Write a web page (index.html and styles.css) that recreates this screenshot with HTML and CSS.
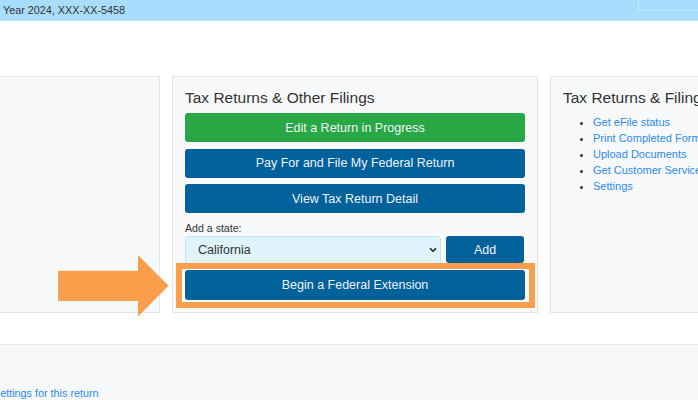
FILE: index.html
```html
<!DOCTYPE html>
<html>
<head>
<meta charset="utf-8">
<link rel="stylesheet" href="styles.css">
</head>
<body>
<div class="page">
  <header class="topbar">
    <span class="topbar-text">Year 2024, XXX-XX-5458</span>
    <span class="topbar-btn"></span>
  </header>

  <main class="cards">
    <section class="card card-left"></section>

    <section class="card card-mid">
      <h2 class="card-title">Tax Returns &amp; Other Filings</h2>
      <button class="btn btn-green">Edit a Return in Progress</button>
      <button class="btn btn-blue">Pay For and File My Federal Return</button>
      <button class="btn btn-blue">View Tax Return Detail</button>
      <label class="state-label">Add a state:</label>
      <div class="state-row">
        <div class="select-wrap">
          <select class="state-select">
            <option>California</option>
          </select>
          <svg class="chevron" width="8" height="6" viewBox="0 0 8 6"><path d="M1 1.2 L4 4.2 L7 1.2" fill="none" stroke="#222" stroke-width="1.6"/></svg>
        </div>
        <button class="btn btn-blue btn-add">Add</button>
      </div>
      <div class="highlight">
        <button class="btn btn-blue btn-ext">Begin a Federal Extension</button>
      </div>
    </section>

    <section class="card card-right">
      <h2 class="card-title">Tax Returns &amp; Filings</h2>
      <ul class="link-list">
        <li><a href="#">Get eFile status</a></li>
        <li><a href="#">Print Completed Forms</a></li>
        <li><a href="#">Upload Documents</a></li>
        <li><a href="#">Get Customer Service</a></li>
        <li><a href="#">Settings</a></li>
      </ul>
    </section>
  </main>

  <footer class="footer">
    <a class="footer-link" href="#">Settings for this return</a>
  </footer>

  <svg class="arrow" width="111" height="62" viewBox="0 0 111 62">
    <polygon points="0,15.7 80,15.7 80,0 110.5,30.8 80,61.5 80,46 0,46" fill="#fa9e4c"/>
  </svg>
</div>
</body>
</html>
```

FILE: styles.css
```css
html, body {
  margin: 0;
  padding: 0;
}
body {
  width: 698px;
  height: 400px;
  overflow: hidden;
  background: #ffffff;
  font-family: "Liberation Sans", Arial, sans-serif;
  color: #333333;
}
.page {
  position: relative;
  width: 698px;
  height: 400px;
}
.topbar {
  display: flex;
  justify-content: space-between;
  align-items: flex-start;
  height: 21px;
  background: #a9ddfd;
  border-bottom: 1px solid #b9e3fb;
  box-sizing: border-box;
}
.topbar-text {
  font-size: 10.8px;
  line-height: 21px;
  padding-left: 3px;
  color: #333;
}
.topbar-btn {
  display: block;
  width: 70px;
  height: 11px;
  margin-right: -10px;
  border: 1px solid #c4e6fb;
  border-top: none;
  box-sizing: border-box;
  flex-shrink: 0;
}
.cards {
  display: flex;
  gap: 12px;
  margin-top: 55px;
  margin-left: -41px;
  align-items: stretch;
}
.card {
  box-sizing: border-box;
  background: #f8f9fa;
  border: 1px solid #e4e7ea;
  flex-shrink: 0;
  padding: 12px;
  height: 237px;
}
.card-left {
  width: 201px;
}
.card-mid {
  width: 366px;
  display: flex;
  flex-direction: column;
}
.card-right {
  width: 220px;
}
.card-title {
  margin: 0 0 5.5px 0;
  font-size: 15.5px;
  line-height: 18.6px;
  font-weight: normal;
  color: #333;
  white-space: nowrap;
}
.btn {
  display: block;
  box-sizing: border-box;
  border: none;
  border-radius: 3px;
  font-family: "Liberation Sans", Arial, sans-serif;
  font-size: 12.5px;
  color: #eef4f8;
  text-align: center;
  padding: 0;
  margin: 0;
}
.card-mid > .btn {
  width: 100%;
  height: 29px;
  margin-bottom: 6.5px;
}
.card-mid > .btn:nth-of-type(3) {
  margin-bottom: 0;
}
.btn-green {
  background: #29a745;
}
.btn-blue {
  background: #01619b;
}
.state-label {
  display: block;
  margin-top: 9px;
  font-size: 10.6px;
  line-height: 12px;
  color: #333;
}
.state-row {
  display: flex;
  gap: 5px;
  margin-top: 2px;
  align-items: flex-start;
}
.select-wrap {
  position: relative;
  width: 256px;
  height: 28px;
}
.state-select {
  appearance: none;
  -webkit-appearance: none;
  width: 100%;
  height: 28px;
  box-sizing: border-box;
  background: #e0f4fd;
  border: 1px solid #bfe4f7;
  border-radius: 3px;
  padding: 0 0 0 12px;
  font-family: "Liberation Sans", Arial, sans-serif;
  font-size: 12.5px;
  color: #333;
  margin: 0;
}
.chevron {
  position: absolute;
  right: 4px;
  top: 11px;
}
.btn-add {
  width: 78px;
  height: 27px;
}
.highlight {
  position: relative;
  margin-top: 6px;
}
.highlight::before {
  content: "";
  position: absolute;
  left: -9px;
  right: -10px;
  top: -7px;
  bottom: -8px;
  border: 6px solid #fa9e4c;
  box-sizing: border-box;
}
.btn-ext {
  width: 100%;
  height: 30px;
  position: relative;
}
.link-list {
  margin: 6.7px 0 0 0;
  padding-left: 30px;
  font-size: 11px;
  line-height: 16px;
  white-space: nowrap;
}
.link-list li {
  color: #333;
}
.link-list a {
  color: #2a8af0;
  text-decoration: none;
}
.footer {
  margin-top: 31px;
  border-top: 1px solid #e6e8eb;
  background: #f7f8fa;
  height: 60px;
  padding-top: 42px;
  box-sizing: border-box;
}
.footer-link {
  display: block;
  margin-left: -7px;
  font-size: 10.8px;
  line-height: 13px;
  color: #2a8af0;
  text-decoration: none;
  white-space: nowrap;
}
.arrow {
  position: absolute;
  left: 58px;
  top: 255px;
}
```
